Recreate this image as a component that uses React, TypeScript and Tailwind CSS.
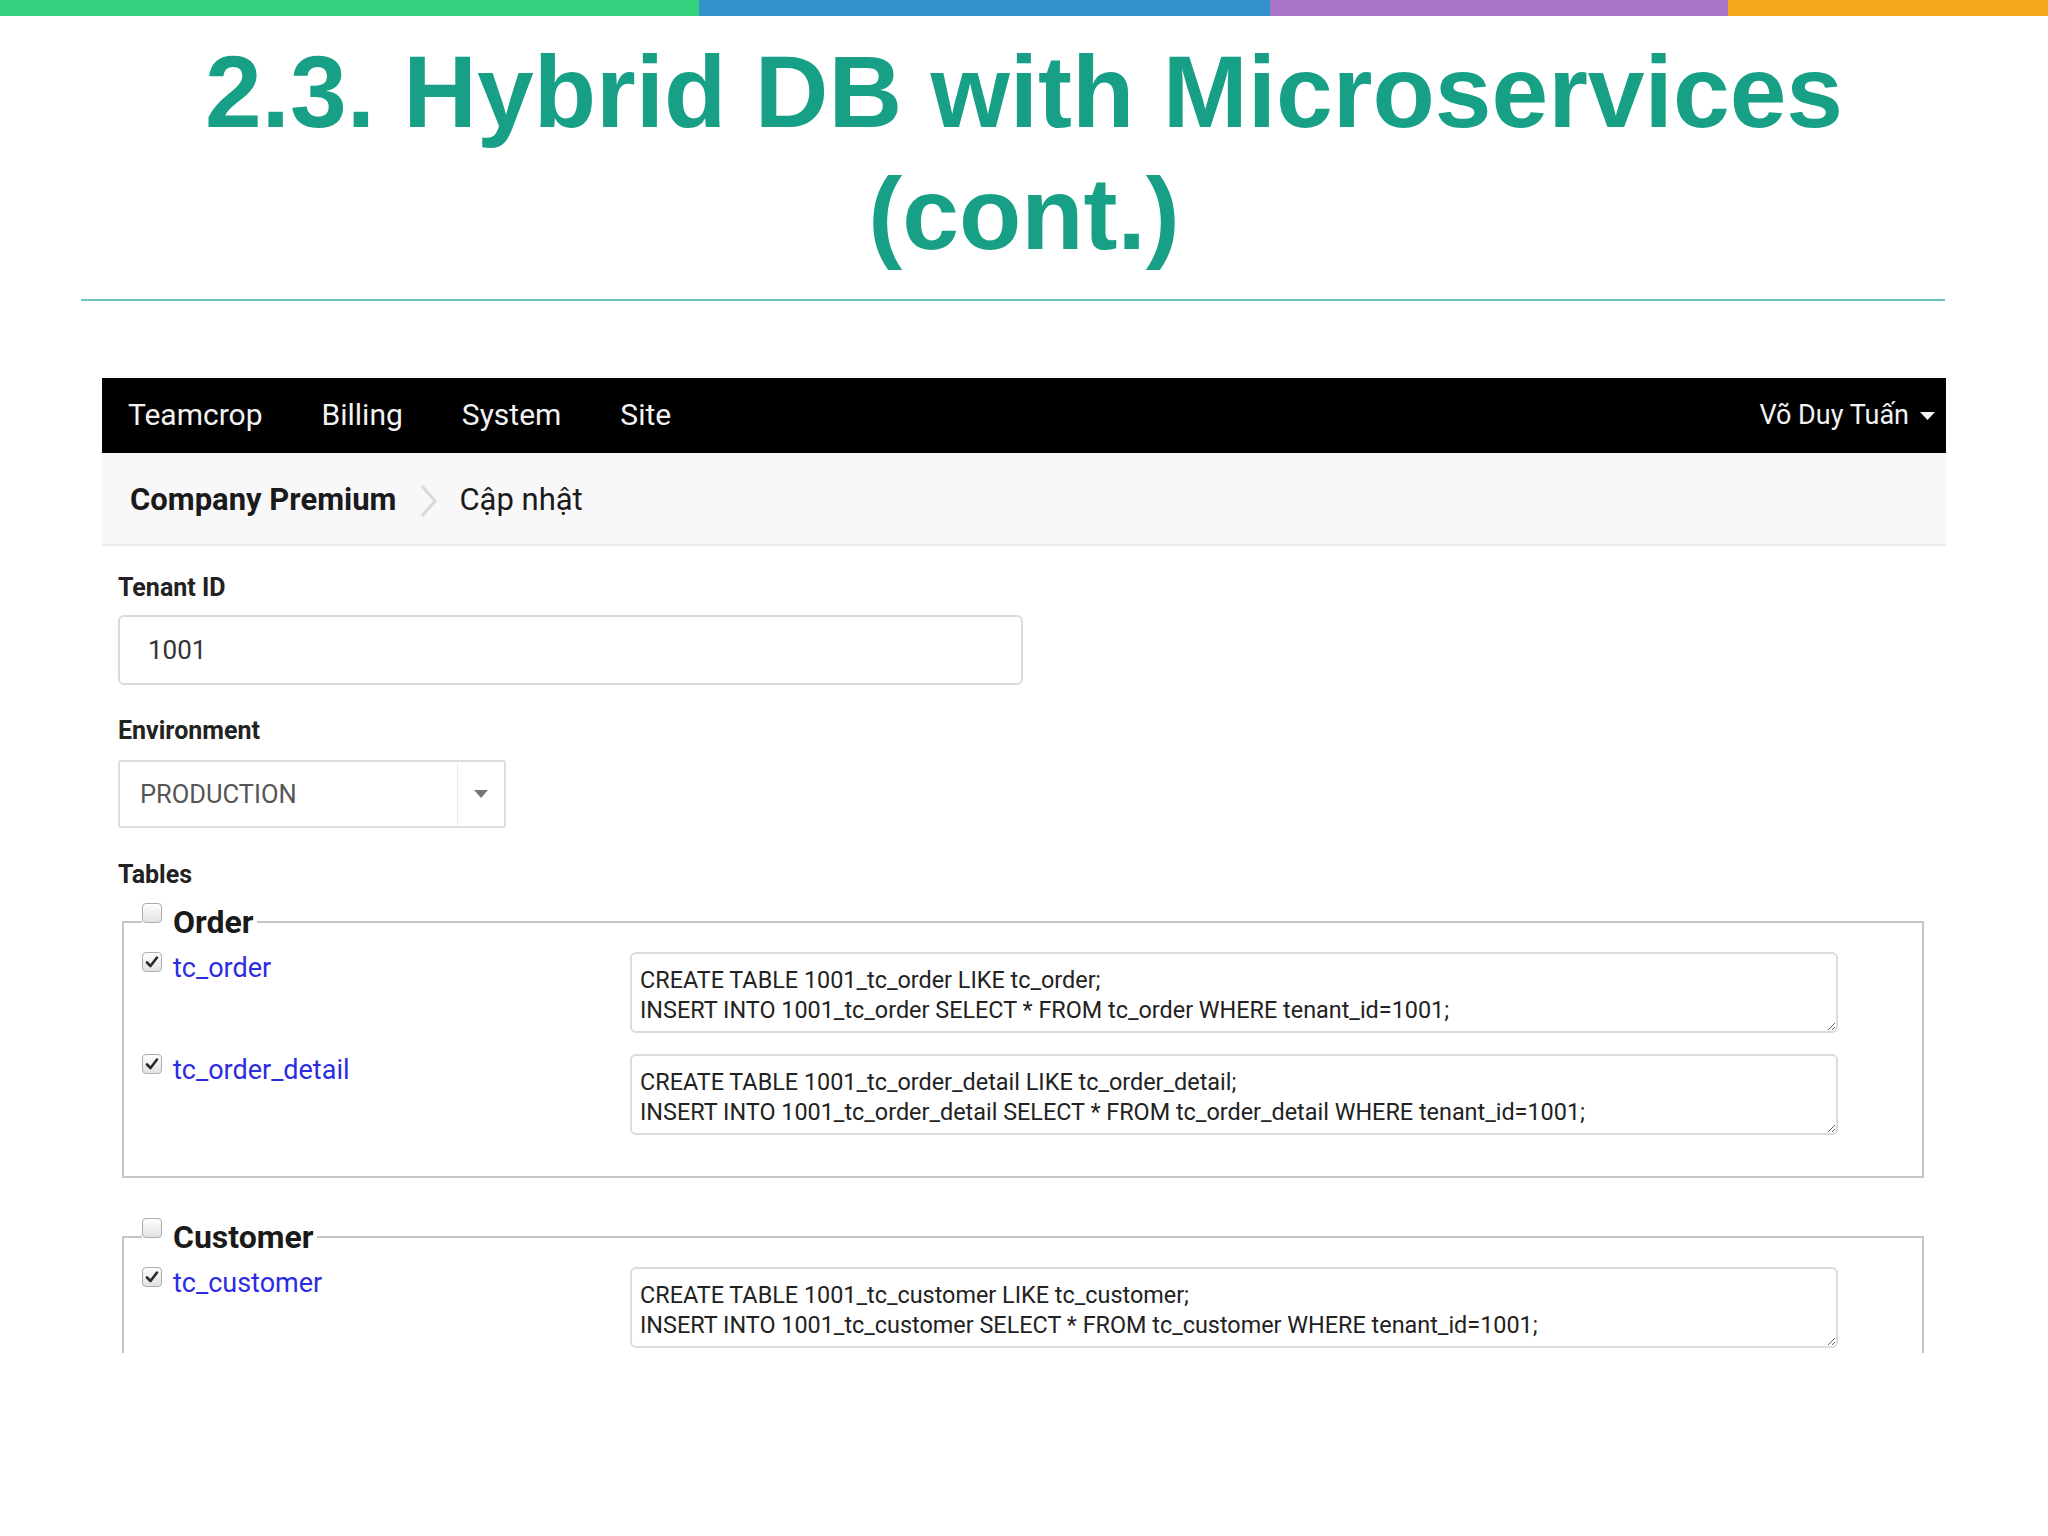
import React from 'react';

const rows: { title: string; tables: { name: string; sql: string }[] }[] = [
  {
    title: 'Order',
    tables: [
      {
        name: 'tc_order',
        sql: 'CREATE TABLE 1001_tc_order LIKE tc_order;\nINSERT INTO 1001_tc_order SELECT * FROM tc_order WHERE tenant_id=1001;',
      },
      {
        name: 'tc_order_detail',
        sql: 'CREATE TABLE 1001_tc_order_detail LIKE tc_order_detail;\nINSERT INTO 1001_tc_order_detail SELECT * FROM tc_order_detail WHERE tenant_id=1001;',
      },
    ],
  },
  {
    title: 'Customer',
    tables: [
      {
        name: 'tc_customer',
        sql: 'CREATE TABLE 1001_tc_customer LIKE tc_customer;\nINSERT INTO 1001_tc_customer SELECT * FROM tc_customer WHERE tenant_id=1001;',
      },
    ],
  },
];

function Check({ checked }: { checked?: boolean }) {
  return (
    <span className="flex h-[20px] w-[20px] shrink-0 items-center justify-center rounded-[4px] border-[1.5px] border-[#adadad] bg-gradient-to-b from-white to-[#e2e2e2]">
      {checked && (
        <svg width="14" height="14" viewBox="0 0 14 14">
          <path d="M2 7.5 L5.5 11 L12 2.5" fill="none" stroke="#2a2a2a" strokeWidth="2.6" strokeLinecap="round" strokeLinejoin="round" />
        </svg>
      )}
    </span>
  );
}

export default function App() {
  return (
    <div className="h-[1536px] w-[2048px] bg-white font-['Roboto',sans-serif]">
      <div className="flex h-[16px]">
        <div className="w-[699px] bg-[#33d07e]" />
        <div className="w-[571px] bg-[#3292c9]" />
        <div className="w-[458px] bg-[#a874c7]" />
        <div className="flex-1 bg-[#f5a91d]" />
      </div>

      <h1 className="mt-[15px] text-center font-['Liberation_Sans',Arial,sans-serif] text-[102px] font-bold leading-[122px] text-[#17a085]">
        2.3. Hybrid DB with Microservices
        <br />
        (cont.)
      </h1>

      <div className="ml-[81px] mt-[24px] h-[2px] w-[1864px] bg-[#6cc6bd]" />

      <div className="ml-[102px] mt-[77px] h-[975px] w-[1844px] overflow-hidden">
        {/* navbar */}
        <nav className="flex h-[75px] items-center bg-black pl-[26px] pr-[11px] text-[#f2f2f2]">
          <div className="flex gap-[59px] pb-[3px] text-[30px]">
            <span>Teamcrop</span>
            <span>Billing</span>
            <span>System</span>
            <span>Site</span>
          </div>
          <div className="ml-auto flex items-center gap-[11px] text-[27px]">
            <span>Võ Duy Tuấn</span>
            <svg width="15" height="8" viewBox="0 0 15 8">
              <path d="M0 0 H15 L7.5 8 Z" fill="#f2f2f2" />
            </svg>
          </div>
        </nav>

        {/* breadcrumb */}
        <div className="flex h-[93px] items-center border-b-2 border-[#ecebef] bg-[#f8f7fa] pl-[28px] pt-[4px] text-[31px] text-[#1a1a1a]">
          <span className="font-bold">Company Premium</span>
          <svg className="ml-[24px] mr-[22px]" width="17" height="34" viewBox="0 0 17 34">
            <path d="M2 2 L15 17 L2 32" fill="none" stroke="#dadada" strokeWidth="3.2" />
          </svg>
          <span>Cập nhật</span>
        </div>

        {/* form */}
        <div className="pl-[16px] pr-[22px] pt-[26px]">
          <label className="block text-[25px] font-bold leading-[32px] text-[#222]">Tenant ID</label>
          <div className="mt-[11px] flex h-[70px] w-[905px] items-center rounded-[6px] border-2 border-[#dadada] pl-[28px] text-[26px] text-[#333]">
            1001
          </div>

          <label className="mt-[30px] block text-[25px] font-bold leading-[32px] text-[#222]">Environment</label>
          <div className="mt-[13px] flex h-[68px] w-[388px] items-center rounded-[3px] border-2 border-[#dedede]">
            <span className="flex-1 pl-[20px] text-[25.5px] text-[#555]">PRODUCTION</span>
            <span className="flex h-full w-[47px] items-center justify-center border-l border-[#ececec]">
              <svg width="14" height="8" viewBox="0 0 14 8">
                <path d="M0 0 H14 L7 8 Z" fill="#777" />
              </svg>
            </span>
          </div>

          <label className="mt-[31px] block text-[25px] font-bold leading-[32px] text-[#222]">Tables</label>

          {rows.map((group, gi) => (
            <fieldset
              key={group.title}
              className={`ml-[4px] border-2 border-[#c6c6c6] pb-[41px] pl-[18px] pr-[84px] ${gi === 0 ? 'mt-[11px]' : 'mt-[39px]'}`}
            >
              <legend className="flex h-[40px] items-center gap-[11px] pr-[3px]">
                <span className="self-start pt-[1px]">
                  <Check />
                </span>
                <span className="text-[32px] font-bold text-[#1a1a1a]">{group.title}</span>
              </legend>
              <div className="space-y-[21px] pt-[10px]">
                {group.tables.map((t) => (
                  <div key={t.name} className="flex items-start">
                    <div className="flex w-[488px] items-start gap-[11px]">
                      <Check checked />
                      <span className="mt-[1px] text-[27px] leading-[30px] text-[#2c2ce0]">{t.name}</span>
                    </div>
                    <textarea
                      readOnly
                      defaultValue={t.sql}
                      className="h-[81px] flex-1 rounded-[6px] border-2 border-[#dcdcdc] px-[8px] pt-[11px] text-[23.4px] leading-[30px] text-[#222] outline-none"
                    />
                  </div>
                ))}
              </div>
            </fieldset>
          ))}
        </div>
      </div>
    </div>
  );
}
